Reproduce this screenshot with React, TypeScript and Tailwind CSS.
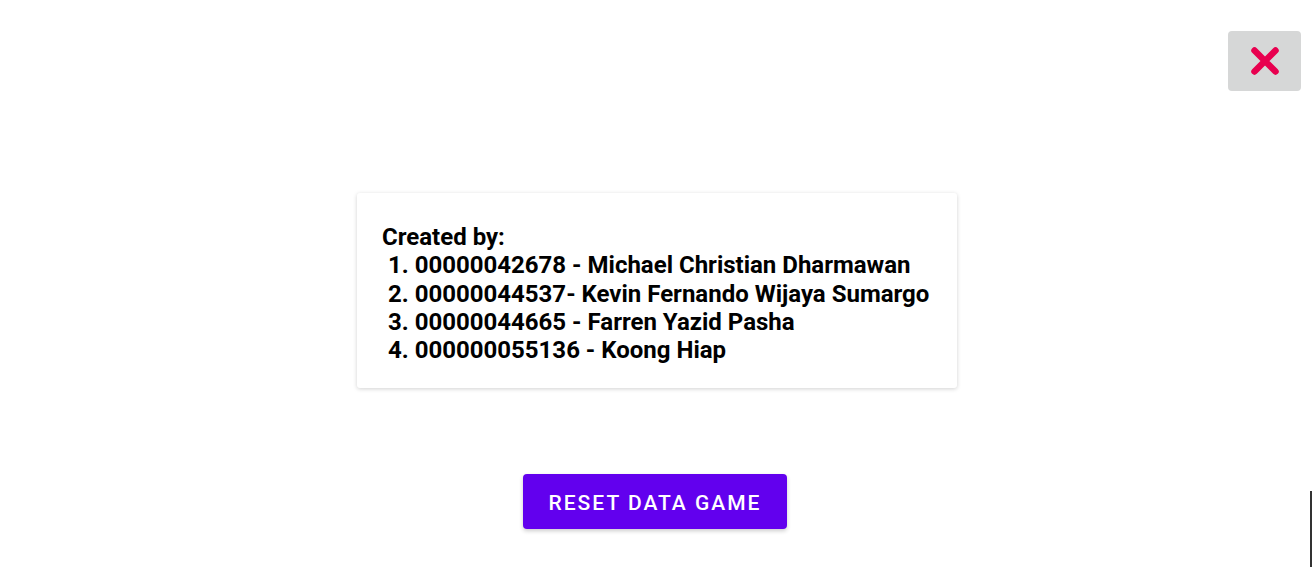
import React from 'react';

const members = [
  '00000042678 - Michael Christian Dharmawan',
  '00000044537- Kevin Fernando Wijaya Sumargo',
  '00000044665 - Farren Yazid Pasha',
  '000000055136 - Koong Hiap',
];

const CloseIcon = () => (
  <svg width="34" height="34" viewBox="0 0 34 34" aria-hidden="true">
    <path d="M6.5 6.5 L27.5 27.5 M27.5 6.5 L6.5 27.5" stroke="#e8004f" strokeWidth="6.5" strokeLinecap="round" />
  </svg>
);

export default function App() {
  return (
    <div className="relative flex h-[567px] w-full flex-col bg-white font-['Roboto',sans-serif]">
      <div className="flex justify-end pr-[11px] pt-[31px]">
        <button
          type="button"
          className="flex h-[60px] w-[73px] items-center justify-center rounded-[4px] bg-[#d6d7d7]"
        >
          <CloseIcon />
        </button>
      </div>

      <div className="mt-[102px] flex justify-center pl-[2px]">
        <div className="w-[600px] rounded-[3px] bg-white px-[25px] pb-[24px] pt-[30px] shadow-[0_1px_4px_rgba(0,0,0,0.18)]">
          <p className="text-[24px] font-bold leading-[28.3px] text-black">Created by:</p>
          {members.map((member, i) => (
            <p key={member} className="whitespace-pre text-[24px] font-bold leading-[28.3px] text-black">
              {` ${i + 1}. ${member}`}
            </p>
          ))}
        </div>
      </div>

      <div className="mt-[86px] flex justify-center pr-[2px]">
        <button
          type="button"
          className="h-[55px] w-[264px] rounded-[4px] bg-[#6200ee] pt-[3px] text-[21px] font-medium uppercase tracking-[2px] text-white shadow-[0_2px_4px_rgba(0,0,0,0.2)]"
        >
          Reset Data Game
        </button>
      </div>

      <div className="absolute bottom-0 right-0 h-[76px] w-[2px] bg-[#333]" />
    </div>
  );
}
